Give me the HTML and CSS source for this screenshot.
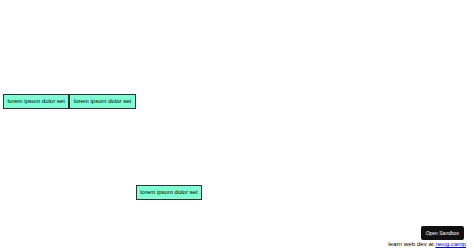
FILE: index.html
```html
<!DOCTYPE html>
<html>
<head>
<meta charset="utf-8">
<link rel="stylesheet" href="styles.css">
</head>
<body>
<div class="page">
  <div class="grid">
    <div class="box b1">lorem ipsum dolor set</div>
    <div class="box b2">lorem ipsum dolor set</div>
    <div class="box b3">lorem ipsum dolor set</div>
  </div>
  <div class="footer">
    <button class="sandbox">Open Sandbox</button>
    <div class="credit">learn web dev at <a href="#">neog.camp</a></div>
  </div>
</div>
</body>
</html>
```
FILE: styles.css
```css
html, body {
  margin: 0;
  padding: 0;
  background: #fff;
  font-family: "Liberation Sans", Arial, sans-serif;
}
.page {
  width: 474px;
  height: 248px;
  position: relative;
}
.grid {
  display: grid;
  grid-template-columns: repeat(3, max-content);
  grid-template-rows: 15px 15px;
  row-gap: 76px;
  padding-top: 94px;
  padding-left: 3px;
}
.box {
  background: #7fffd4;
  border: 1px solid #333;
  font-size: 6px;
  line-height: 13px;
  padding: 0 3.5px;
  color: #000;
  white-space: nowrap;
}
.b1 { grid-column: 1; grid-row: 1; }
.b2 { grid-column: 2; grid-row: 1; }
.b3 { grid-column: 3; grid-row: 2; }
.footer {
  position: absolute;
  right: 8px;
  bottom: 0;
  display: flex;
  flex-direction: column;
  align-items: flex-end;
}
.sandbox {
  background: #111;
  color: #fff;
  border: none;
  border-radius: 2px;
  font-family: "Liberation Sans", Arial, sans-serif;
  font-size: 5px;
  padding: 4px 5px;
  margin-right: 2px;
  margin-bottom: 0;
  line-height: 6px;
}
.credit {
  font-size: 6.2px;
  line-height: 8px;
  color: #000;
}
.credit a {
  color: #00e;
}
```
